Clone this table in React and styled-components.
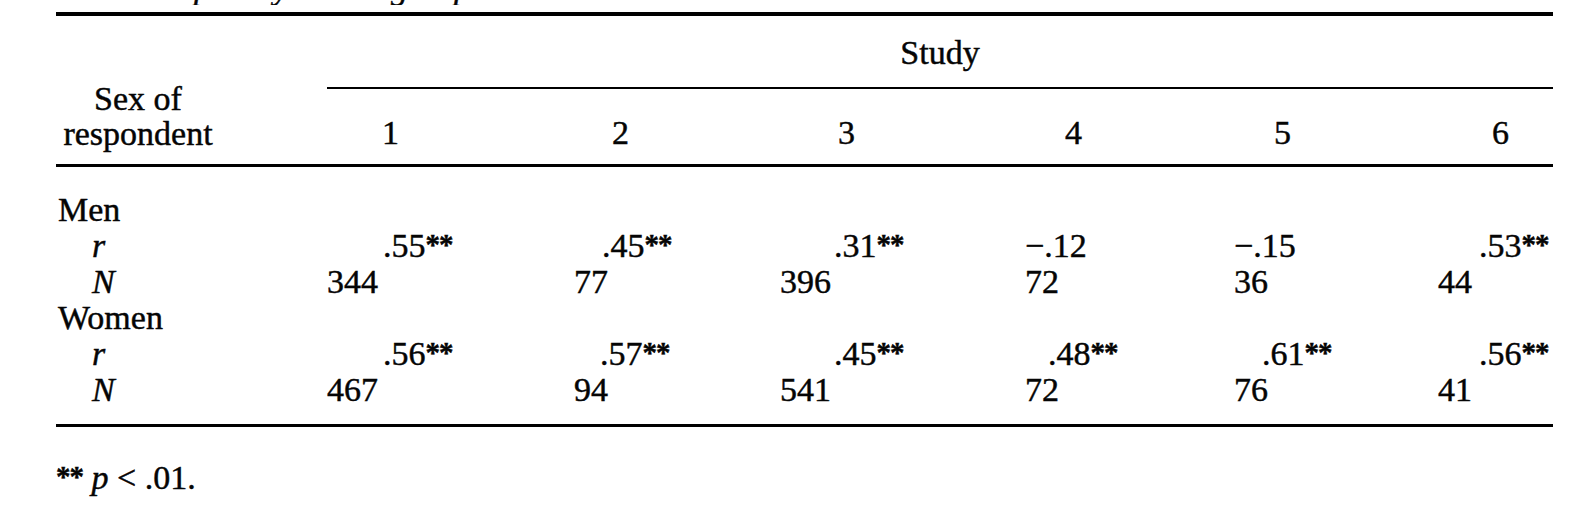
import React from 'react';
import styled, { createGlobalStyle } from 'styled-components';

const Global = createGlobalStyle`
  html, body { margin: 0; padding: 0; background: #ffffff; }
  body {
    font-family: "Liberation Serif", "Times New Roman", serif;
    color: #050505;
    -webkit-text-stroke: 0.45px #050505;
  }
`;

const COLS = '271px 247px 206px 245px 209px 204px 115px';

const Page = styled.div`
  width: 1580px;
  height: 515px;
  overflow: hidden;
  box-sizing: border-box;
  padding-left: 56px;
`;

const Sheet = styled.div`
  width: 1497px;
`;

const TitleClip = styled.div`
  height: 5px;
  overflow: hidden;
  display: flex;
  align-items: flex-end;
  padding-left: 18px;
`;

const Title = styled.div`
  font-style: italic;
  font-size: 34px;
  line-height: 34px;
  white-space: nowrap;
`;

const Head = styled.div`
  margin-top: 7px;
  display: grid;
  grid-template-columns: ${COLS};
  border-top: 4px solid #000;
  border-bottom: 3px solid #000;
  font-size: 34px;
`;

const LabelHead = styled.div`
  grid-column: 1;
  grid-row: 1 / span 2;
  align-self: end;
  justify-self: start;
  width: 164px;
  text-align: center;
  line-height: 35px;
  padding-bottom: 13px;
`;

const StudyHead = styled.div`
  grid-column: 2 / -1;
  grid-row: 1;
  text-align: center;
  padding: 19px 0 16px;
  line-height: 36px;
  border-bottom: 2px solid #000;
`;

const DigitCell = styled.div`
  grid-row: 2;
  padding: 26px 0 13px ${(p) => p.$indent}px;
  line-height: 36px;
`;

const Body = styled.div`
  display: grid;
  grid-template-columns: ${COLS};
  grid-auto-rows: 36px;
  padding: 25px 0 16px;
  border-bottom: 3px solid #000;
  font-size: 34px;
  line-height: 36px;
`;

const GroupLabel = styled.div`
  grid-column: 1 / -1;
  padding-left: 2px;
`;

const StatLabel = styled.div`
  grid-column: 1;
  padding-left: 36px;
  font-style: italic;
`;

const Value = styled.div`
  padding-left: ${(p) => p.$indent}px;
  white-space: nowrap;
`;

const Stars = styled.span`
  font-size: 29px;
  font-weight: 700;
  position: relative;
  top: -3px;
  letter-spacing: -1px;
`;

const Footnote = styled.div`
  margin-top: 33px;
  font-size: 34px;
  line-height: 36px;
`;

const Ital = styled.span`
  font-style: italic;
`;

const headers = [
  { label: '1', indent: 55 },
  { label: '2', indent: 38 },
  { label: '3', indent: 58 },
  { label: '4', indent: 40 },
  { label: '5', indent: 40 },
  { label: '6', indent: 54 },
];

const groups = [
  {
    name: 'Men',
    r: [
      { v: '.55', s: true, i: 56 },
      { v: '.45', s: true, i: 28 },
      { v: '.31', s: true, i: 54 },
      { v: '\u2212.12', s: false, i: 0 },
      { v: '\u2212.15', s: false, i: 0 },
      { v: '.53', s: true, i: 41 },
    ],
    n: ['344', '77', '396', '72', '36', '44'],
  },
  {
    name: 'Women',
    r: [
      { v: '.56', s: true, i: 56 },
      { v: '.57', s: true, i: 26 },
      { v: '.45', s: true, i: 54 },
      { v: '.48', s: true, i: 23 },
      { v: '.61', s: true, i: 28 },
      { v: '.56', s: true, i: 41 },
    ],
    n: ['467', '94', '541', '72', '76', '41'],
  },
];

export default function App() {
  return (
    <>
      <Global />
      <Page>
        <Sheet>
          <TitleClip>
            <Title>The Reciprocity within groups</Title>
          </TitleClip>
          <Head>
            <LabelHead>
              Sex of
              <br />
              respondent
            </LabelHead>
            <StudyHead>Study</StudyHead>
            {headers.map((h) => (
              <DigitCell key={h.label} $indent={h.indent}>
                {h.label}
              </DigitCell>
            ))}
          </Head>
          <Body>
            {groups.map((g) => (
              <React.Fragment key={g.name}>
                <GroupLabel>{g.name}</GroupLabel>
                <StatLabel>r</StatLabel>
                {g.r.map((c, k) => (
                  <Value key={'r' + k} $indent={c.i}>
                    {c.v}
                    {c.s && <Stars>**</Stars>}
                  </Value>
                ))}
                <StatLabel>N</StatLabel>
                {g.n.map((c, k) => (
                  <Value key={'n' + k} $indent={0}>
                    {c}
                  </Value>
                ))}
              </React.Fragment>
            ))}
          </Body>
          <Footnote>
            <Stars>**</Stars> <Ital>p</Ital> &lt; .01.
          </Footnote>
        </Sheet>
      </Page>
    </>
  );
}
